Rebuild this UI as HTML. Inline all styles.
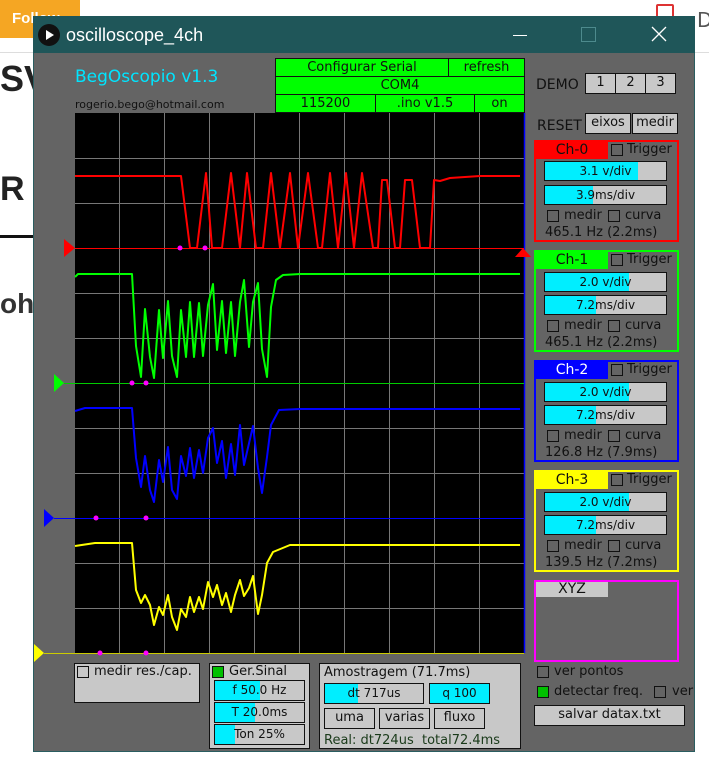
<!DOCTYPE html>
<html><head><meta charset="utf-8"><style>
*{box-sizing:border-box;margin:0;padding:0}
body{width:709px;height:766px;overflow:hidden;background:#fff;position:relative;font-family:"DejaVu Sans","Liberation Sans",sans-serif}
.a{position:absolute}
.t{position:absolute;font-size:13px;color:#111;white-space:nowrap;line-height:1}
.btn{position:absolute;background:#c8c8c8;border:1px solid #111;font-size:13px;text-align:center;color:#111;line-height:18px}
.cb{position:absolute;width:12px;height:12px;border:1px solid #111;background:#646464}
.sl{position:absolute;background:#c8c8c8;border:1px solid #111;font-size:12px;color:#111;text-align:center;line-height:18px;overflow:hidden}
.sl i{position:absolute;left:0;top:0;bottom:0;background:#00eeff}
.sl span{position:relative}
.ch{position:absolute;left:534px;width:145px;height:102px;border:2px solid}
.ch .h{position:absolute;left:0;top:0;width:72px;height:17px;text-align:center;font-size:14px;line-height:17px}
.gr td{border:1px solid #111;text-align:center;font-size:13px;height:18px;line-height:16px;color:#111}
</style></head><body>
<div class="a" style="left:0;top:0;width:80px;height:38px;background:#f5a623;border-radius:0 0 4px 0;color:#fff;font-size:15px;font-weight:bold;padding:10px 0 0 12px;font-family:'Liberation Sans',sans-serif">Follow</div>
<div class="a" style="left:0;top:52px;width:709px;height:1px;background:#ddd"></div>
<div class="a" style="left:0;top:58px;font-size:36px;font-weight:bold;color:#222;font-family:'Liberation Sans',sans-serif">SV</div>
<div class="a" style="left:0;top:170px;font-size:34px;font-weight:bold;color:#222;font-family:'Liberation Sans',sans-serif">R</div>
<div class="a" style="left:0;top:235px;width:34px;height:3px;background:#111"></div>
<div class="a" style="left:0;top:288px;font-size:28px;font-weight:bold;color:#333;font-family:'Liberation Sans',sans-serif">ohr</div>
<div class="a" style="left:656px;top:4px;width:18px;height:22px;border:2px solid #d33;border-radius:2px"></div>
<div class="a" style="left:697px;top:8px;font-size:20px;color:#555">D</div>

<!-- window -->
<div class="a" style="left:33px;top:16px;width:662px;height:736px;background:#646464;border:1px solid #2a5d60"></div>
<div class="a" style="left:33px;top:16px;width:662px;height:37px;background:#1f5659"></div>
<div class="a" style="left:38px;top:24px;width:22px;height:22px;border-radius:50%;background:#111"></div>
<div class="a" style="left:46px;top:30px;width:0;height:0;border-left:8px solid #fff;border-top:5px solid transparent;border-bottom:5px solid transparent"></div>
<div class="a" style="left:66px;top:25px;font-size:18px;color:#fff;font-family:'Liberation Sans',sans-serif">oscilloscope_4ch</div>
<div class="a" style="left:513px;top:35px;width:14px;height:1px;background:#fff"></div>
<div class="a" style="left:581px;top:27px;width:15px;height:15px;border:1px solid #4d8a8d"></div>
<svg class="a" style="left:651px;top:26px" width="16" height="16"><path d="M1 1L15 15M15 1L1 15" stroke="#fff" stroke-width="1.3"/></svg>

<div class="a" style="left:75px;top:67px;font-size:17px;color:#00e5ff">BegOscopio v1.3</div>
<div class="t" style="left:75px;top:99px;font-size:11px">rogerio.bego@hotmail.com</div>

<table class="a gr" style="left:275px;top:58px;width:250px;border-collapse:collapse;background:#00ff00">
<tr><td colspan="2" style="width:174px">Configurar Serial</td><td style="width:76px" colspan="1">refresh</td></tr>
<tr><td colspan="3">COM4</td></tr>
</table>
<table class="a gr" style="left:275px;top:94px;width:250px;border-collapse:collapse;background:#00ff00">
<tr><td style="width:100px">115200</td><td style="width:99px">.ino v1.5</td><td>on</td></tr></table>

<div class="t" style="left:536px;top:78px;font-size:14px">DEMO</div>
<div class="btn" style="left:585px;top:73px;width:31px;height:21px">1</div>
<div class="btn" style="left:615px;top:73px;width:31px;height:21px">2</div>
<div class="btn" style="left:645px;top:73px;width:31px;height:21px">3</div>
<div class="t" style="left:537px;top:119px;font-size:14px">RESET</div>
<div class="btn" style="left:585px;top:113px;width:46px;height:21px;font-size:13px">eixos</div>
<div class="btn" style="left:632px;top:113px;width:46px;height:21px;font-size:13px">medir</div>

<!-- plot -->
<svg class="a" style="left:0;top:0" width="709" height="766">
<rect x="75" y="113" width="449" height="540" fill="#000"/>
<g stroke="#777" stroke-width="1">
<path d="M119.5 113V653M164.5 113V653M209.5 113V653M254.5 113V653M299.5 113V653M344.5 113V653M389.5 113V653M434.5 113V653M479.5 113V653"/>
<path d="M75 158.5H524M75 203.5H524M75 293.5H524M75 338.5H524M75 428.5H524M75 473.5H524M75 563.5H524M75 608.5H524"/>
</g>
<line x1="524.5" y1="113" x2="524.5" y2="653" stroke="#00f" stroke-width="1.5"/>
<line x1="75" y1="248.5" x2="524" y2="248.5" stroke="#f00"/>
<line x1="64" y1="383.5" x2="524" y2="383.5" stroke="#0c0"/>
<line x1="54" y1="518.5" x2="524" y2="518.5" stroke="#00f"/>
<line x1="44" y1="653.5" x2="524" y2="653.5" stroke="#cc0"/>
<g fill="none" stroke-width="2" stroke-linejoin="round">
<polyline stroke="#f00" points="75,176 181,176 190,248 197,248 206,173 212,248 222,248 231,173 240,248 247,173 256,248 263,248 271,173 280,248 290,173 298,248 308,173 318,248 322,248 330,173 338,248 346,173 354,248 362,173 373,248 378,248 382,180 387,180 395,248 400,248 405,180 412,180 420,248 430,248 434,180 440,181 450,178 480,176 520,176"/>
<polyline stroke="#0f0" points="75,277 78,274 132,274 136,346 141,377 145,309 150,357 154,378 159,310 163,358 168,301 172,356 177,377 181,310 186,357 190,302 194,357 199,303 203,356 208,305 213,284 217,350 222,301 226,353 231,302 235,356 240,302 244,280 249,347 253,302 258,283 262,349 267,377 271,307 276,280 283,275 300,274 520,274"/>
<polyline stroke="#00f" points="75,411 85,408 132,408 136,458 141,487 145,456 150,490 154,502 159,460 163,482 168,447 172,490 177,499 181,456 186,476 190,448 194,478 199,450 203,473 208,438 213,428 217,463 222,441 226,478 231,444 235,475 240,425 244,465 253,426 258,468 262,493 267,457 271,425 279,410 300,409 520,409"/>
<polyline stroke="#ff0" points="75,546 95,543 132,543 136,590 141,603 145,595 150,605 154,625 159,607 163,615 168,595 172,617 177,630 181,609 186,617 190,597 194,612 199,597 203,609 208,582 213,597 217,585 222,605 226,593 231,612 235,595 240,580 244,596 249,588 253,576 258,614 262,595 267,563 273,552 290,545 520,545"/>
</g>
<polygon points="64,239 75,248 64,257" fill="#f00"/>
<polygon points="515,257 531,257 523,248" fill="#f00"/>
<polygon points="54,374 64,383 54,392" fill="#0f0"/>
<polygon points="44,509 54,518 44,527" fill="#00f"/>
<polygon points="34,644 44,653 34,662" fill="#ff0"/>
<g fill="#f0f"><circle cx="180" cy="248" r="2.5"/><circle cx="205" cy="248" r="2.5"/><circle cx="132" cy="383" r="2.5"/><circle cx="146" cy="383" r="2.5"/><circle cx="96" cy="518" r="2.5"/><circle cx="146" cy="518" r="2.5"/><circle cx="100" cy="653" r="2.5"/><circle cx="146" cy="653" r="2.5"/></g>
</svg>

<!-- channels -->
<div class="ch" style="top:140px;border-color:#f00"><div class="h" style="background:#f00;color:#111">Ch-0</div></div>
<div class="cb" style="left:611px;top:144px"></div><div class="t" style="left:627px;top:143px;font-size:13px">Trigger</div>
<div class="sl" style="left:544px;top:161px;width:123px;height:20px"><i style="width:93px"></i><span>3.1 v/div</span></div>
<div class="sl" style="left:544px;top:185px;width:123px;height:20px"><i style="width:48px"></i><span>3.9ms/div</span></div>
<div class="cb" style="left:547px;top:210px"></div><div class="t" style="left:564px;top:209px;font-size:13px">medir</div>
<div class="cb" style="left:608px;top:210px"></div><div class="t" style="left:625px;top:209px;font-size:13px">curva</div>
<div class="t" style="left:545px;top:226px;font-size:13px">465.1 Hz (2.2ms)</div>

<div class="ch" style="top:250px;border-color:#0f0"><div class="h" style="background:#0f0;color:#111">Ch-1</div></div>
<div class="cb" style="left:611px;top:254px"></div><div class="t" style="left:627px;top:253px;font-size:13px">Trigger</div>
<div class="sl" style="left:544px;top:272px;width:123px;height:20px"><i style="width:84px"></i><span>2.0 v/div</span></div>
<div class="sl" style="left:544px;top:295px;width:123px;height:20px"><i style="width:51px"></i><span>7.2ms/div</span></div>
<div class="cb" style="left:547px;top:320px"></div><div class="t" style="left:564px;top:319px;font-size:13px">medir</div>
<div class="cb" style="left:608px;top:320px"></div><div class="t" style="left:625px;top:319px;font-size:13px">curva</div>
<div class="t" style="left:545px;top:336px;font-size:13px">465.1 Hz (2.2ms)</div>

<div class="ch" style="top:360px;border-color:#00f"><div class="h" style="background:#00f;color:#fff">Ch-2</div></div>
<div class="cb" style="left:611px;top:364px"></div><div class="t" style="left:627px;top:363px;font-size:13px">Trigger</div>
<div class="sl" style="left:544px;top:382px;width:123px;height:20px"><i style="width:84px"></i><span>2.0 v/div</span></div>
<div class="sl" style="left:544px;top:405px;width:123px;height:20px"><i style="width:51px"></i><span>7.2ms/div</span></div>
<div class="cb" style="left:547px;top:430px"></div><div class="t" style="left:564px;top:429px;font-size:13px">medir</div>
<div class="cb" style="left:608px;top:430px"></div><div class="t" style="left:625px;top:429px;font-size:13px">curva</div>
<div class="t" style="left:545px;top:446px;font-size:13px">126.8 Hz (7.9ms)</div>

<div class="ch" style="top:470px;border-color:#ff0"><div class="h" style="background:#ff0;color:#111">Ch-3</div></div>
<div class="cb" style="left:611px;top:474px"></div><div class="t" style="left:627px;top:473px;font-size:13px">Trigger</div>
<div class="sl" style="left:544px;top:492px;width:123px;height:20px"><i style="width:84px"></i><span>2.0 v/div</span></div>
<div class="sl" style="left:544px;top:515px;width:123px;height:20px"><i style="width:51px"></i><span>7.2ms/div</span></div>
<div class="cb" style="left:547px;top:540px"></div><div class="t" style="left:564px;top:539px;font-size:13px">medir</div>
<div class="cb" style="left:608px;top:540px"></div><div class="t" style="left:625px;top:539px;font-size:13px">curva</div>
<div class="t" style="left:545px;top:556px;font-size:13px">139.5 Hz (7.2ms)</div>

<div class="ch" style="top:580px;height:82px;border-color:#f0f"><div class="h" style="background:#c8c8c8;color:#111;height:15px;line-height:15px">XYZ</div></div>

<div class="cb" style="left:537px;top:666px"></div><div class="t" style="left:554px;top:665px;font-size:13px">ver pontos</div>
<div class="cb" style="left:537px;top:686px;background:#00c000"></div><div class="t" style="left:554px;top:685px;font-size:13px">detectar freq.</div>
<div class="cb" style="left:654px;top:686px"></div><div class="t" style="left:672px;top:685px;font-size:13px">ver</div>
<div class="btn" style="left:534px;top:705px;width:151px;height:21px;font-size:13px">salvar datax.txt</div>

<!-- bottom -->
<div class="a" style="left:74px;top:663px;width:126px;height:40px;background:#c8c8c8;border:1px solid #111"></div>
<div class="cb" style="left:77px;top:666px;background:#c8c8c8"></div><div class="t" style="left:94px;top:665px;font-size:13px">medir res./cap.</div>

<div class="a" style="left:209px;top:663px;width:101px;height:86px;background:#c8c8c8;border:1px solid #111"></div>
<div class="cb" style="left:212px;top:666px;background:#00c000"></div><div class="t" style="left:229px;top:665px;font-size:13px">Ger.Sinal</div>
<div class="sl" style="left:214px;top:680px;width:91px;height:21px"><i style="width:45px"></i><span>f 50.0 Hz</span></div>
<div class="sl" style="left:214px;top:702px;width:91px;height:21px"><i style="width:40px"></i><span>T 20.0ms</span></div>
<div class="sl" style="left:214px;top:724px;width:91px;height:21px"><i style="width:20px"></i><span>Ton 25%</span></div>

<div class="a" style="left:319px;top:663px;width:202px;height:86px;background:#c8c8c8;border:1px solid #111"></div>
<div class="t" style="left:324px;top:666px;font-size:13px">Amostragem (71.7ms)</div>
<div class="sl" style="left:324px;top:683px;width:100px;height:21px"><i style="width:33px"></i><span>dt 717us</span></div>
<div class="sl" style="left:429px;top:683px;width:61px;height:21px"><i style="width:59px"></i><span>q 100</span></div>
<div class="btn" style="left:324px;top:708px;width:51px;height:21px;font-size:13px">uma</div>
<div class="btn" style="left:379px;top:708px;width:51px;height:21px;font-size:13px">varias</div>
<div class="btn" style="left:434px;top:708px;width:51px;height:21px;font-size:13px">fluxo</div>
<div class="t" style="left:324px;top:734px;font-size:13px;color:#1a3a1a">Real: dt724us&nbsp; total72.4ms</div>
</body></html>
